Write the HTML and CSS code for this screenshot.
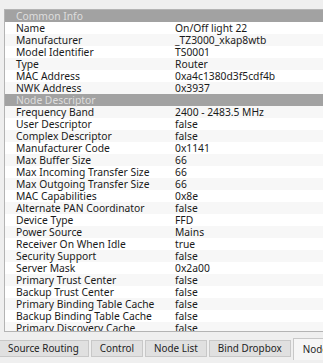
FILE: index.html
```html
<!DOCTYPE html>
<html lang="en">
<head>
  <meta charset="UTF-8"/>
  <title>Node Info</title>
  <link rel="stylesheet" href="styles.css">
</head>
<body>
  <div class="panel">
    <div class="table-wrap">
      <table class="info">
        <tr class="section"><td colspan="2">Common Info</td></tr>
        <tr><td>Name</td><td>On/Off light 22</td></tr>
        <tr><td>Manufacturer</td><td>_TZ3000_xkap8wtb</td></tr>
        <tr><td>Model Identifier</td><td>TS0001</td></tr>
        <tr><td>Type</td><td>Router</td></tr>
        <tr><td>MAC Address</td><td>0xa4c1380d3f5cdf4b</td></tr>
        <tr><td>NWK Address</td><td>0x3937</td></tr>
        <tr class="section"><td colspan="2">Node Descriptor</td></tr>
        <tr><td>Frequency Band</td><td>2400 - 2483.5 MHz</td></tr>
        <tr><td>User Descriptor</td><td>false</td></tr>
        <tr><td>Complex Descriptor</td><td>false</td></tr>
        <tr><td>Manufacturer Code</td><td>0x1141</td></tr>
        <tr><td>Max Buffer Size</td><td>66</td></tr>
        <tr><td>Max Incoming Transfer Size</td><td>66</td></tr>
        <tr><td>Max Outgoing Transfer Size</td><td>66</td></tr>
        <tr><td>MAC Capabilities</td><td>0x8e</td></tr>
        <tr><td>Alternate PAN Coordinator</td><td>false</td></tr>
        <tr><td>Device Type</td><td>FFD</td></tr>
        <tr><td>Power Source</td><td>Mains</td></tr>
        <tr><td>Receiver On When Idle</td><td>true</td></tr>
        <tr><td>Security Support</td><td>false</td></tr>
        <tr><td>Server Mask</td><td>0x2a00</td></tr>
        <tr><td>Primary Trust Center</td><td>false</td></tr>
        <tr><td>Backup Trust Center</td><td>false</td></tr>
        <tr><td>Primary Binding Table Cache</td><td>false</td></tr>
        <tr><td>Backup Binding Table Cache</td><td>false</td></tr>
        <tr><td>Primary Discovery Cache</td><td>false</td></tr>
      </table>
    </div>
  </div>

  <div class="tabs">
    <div class="tab">Source Routing</div>
    <div class="tab">Control</div>
    <div class="tab">Node List</div>
    <div class="tab">Bind Dropbox</div>
    <div class="tab active">Node Info</div>
  </div>
</body>
</html>
```

FILE: styles.css
```css
* {
  box-sizing: border-box;
  margin: 0;
  padding: 0;
}

body {
  width: 323px;
  height: 363px;
  overflow: hidden;
  background: #efefef;
  font-family: 'Noto Sans', sans-serif;
  font-size: 10.3px;
  color: #1a1a1a;
}

.panel {
  padding: 9px 0 0 4px;
  height: 332px;
  overflow: hidden;
}

.table-wrap {
  height: 323px;
  overflow: hidden;
  border: 1px solid #b4b4b4;
  border-right: none;
  background: #ffffff;
}

.info {
  border-collapse: collapse;
  width: 100%;
}

.info td {
  height: 12px;
  line-height: 12px;
  padding: 0;
  white-space: nowrap;
}

.info td:first-child {
  padding-left: 11px;
  width: 170px;
}

.info tr:nth-child(odd) {
  background: #f7f7f7;
}

.info tr.section {
  background: #a2a2a2;
  color: #dedede;
}

/* Tab bar */
.tabs {
  display: flex;
  align-items: flex-end;
  gap: 2px;
  height: 31px;
  margin-left: -4px;
  overflow: hidden;
  font-size: 9.9px;
  white-space: nowrap;
}

.tab {
  flex-shrink: 0;
  height: 17px;
  line-height: 15px;
  padding: 0 8px;
  background: #e0e0e0;
  border: 1px solid #c8c8c8;
  color: #222;
  margin-bottom: 6px;
}

.tab:first-child {
  padding-left: 11px;
  padding-right: 9px;
}

.tab.active {
  background: #f6f6f6;
  height: 22px;
  line-height: 20px;
  padding-left: 9px;
  margin-bottom: 3px;
  border-bottom: none;
}
```
